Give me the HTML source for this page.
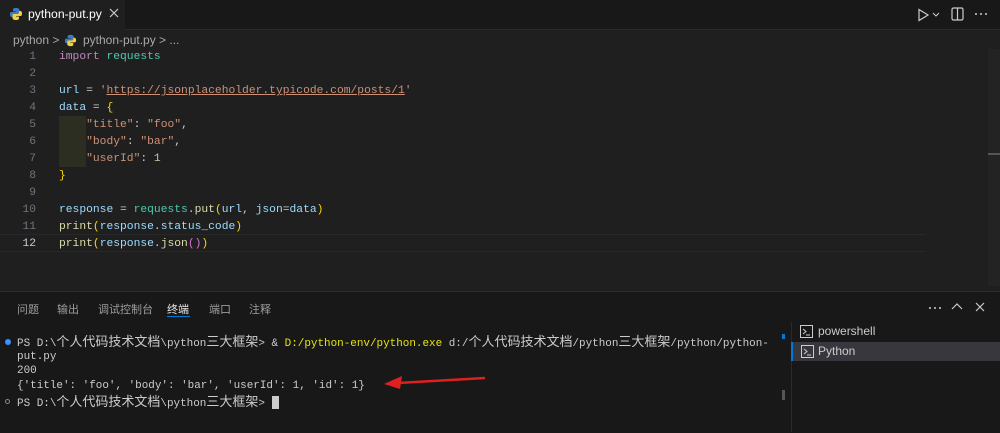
<!DOCTYPE html><html><head><meta charset="utf-8"><style>
body{margin:0;width:1000px;height:432px;background:#1f1f1f;position:relative;overflow:hidden;font-family:"Liberation Sans","Noto Sans CJK SC",sans-serif;color:#ccc}
.a{position:absolute}
.code{font-family:"Liberation Mono","Noto Sans CJK SC",monospace;font-size:11.3px;white-space:pre}
.ln{position:absolute;left:0;width:36px;text-align:right;color:#6e7681;font-family:"Liberation Mono",monospace;font-size:11.3px}
.cl{position:absolute;left:59px;color:#9cdcfe}
.k{color:#c586c0}.m{color:#4ec9b0}.s{color:#ce9178}.y{color:#ffd700}.f{color:#dcdcaa}.w{color:#ccc}.n{color:#b5cea8}.p{color:#da70d6}
.term{font-family:"Liberation Mono","Noto Sans CJK SC",monospace;font-size:10.95px;line-height:15px;height:15px;white-space:pre;color:#ccc;position:absolute;left:17px}
.c{font-size:13px;line-height:15px}
</style></head><body>
<div class="a" style="left:0;top:0;width:1000px;height:29px;background:#181818;border-bottom:1px solid #2b2b2b"></div>
<div class="a" style="left:0;top:0;width:125px;height:30px;background:#1f1f1f"></div>
<svg class="a" style="left:9px;top:7px" width="14" height="14" viewBox="0 0 14 14"><path d="M7 1C4 1 4 2 4 3v1.5h3V5H2.5C1 5 1 6.5 1 7.5S1.5 10 2.5 10H4V8.5C4 7.5 5 7 6 7h3c1 0 1.5-.5 1.5-1.5V3c0-1-1-2-3.5-2z" fill="#3f7cbf"/><path d="M7 13c3 0 3-1 3-2V9.5H7V9h4.5c1.5 0 1.5-1.5 1.5-2.5S12.5 4 11.5 4H10v1.5c0 1-1 1.5-2 1.5H5c-1 0-1.5.5-1.5 1.5V11c0 1 1 2 3.5 2z" fill="#f5cf3f"/></svg>
<div class="a" style="left:28px;top:7px;font-size:12.2px;color:#fff">python-put.py</div>
<svg class="a" style="left:109px;top:8px" width="10" height="10"><path d="M1 1L9 9M9 1L1 9" stroke="#ccc" stroke-width="1.2"/></svg>
<svg class="a" style="left:916px;top:8px" width="14" height="14"><path d="M3 1.5L12 7L3 12.5Z" fill="none" stroke="#ccc" stroke-width="1.2"/></svg>
<svg class="a" style="left:932px;top:12px" width="8" height="5"><path d="M1 1L4 4L7 1" fill="none" stroke="#ccc"/></svg>
<svg class="a" style="left:951px;top:7px" width="13" height="14"><rect x="1" y="1" width="11" height="12" rx="1.5" fill="none" stroke="#ccc" stroke-width="1.2"/><line x1="6.5" y1="1" x2="6.5" y2="13" stroke="#ccc" stroke-width="1.2"/></svg>
<svg class="a" style="left:974px;top:12px" width="14" height="4"><circle cx="2" cy="2" r="1" fill="#ccc"/><circle cx="7" cy="2" r="1" fill="#ccc"/><circle cx="12" cy="2" r="1" fill="#ccc"/></svg>
<div class="a" style="left:13px;top:33px;font-size:12px;color:#a9a9a9">python &gt;</div>
<svg class="a" style="left:64px;top:34px" width="13" height="13" viewBox="0 0 14 14"><path d="M7 1C4 1 4 2 4 3v1.5h3V5H2.5C1 5 1 6.5 1 7.5S1.5 10 2.5 10H4V8.5C4 7.5 5 7 6 7h3c1 0 1.5-.5 1.5-1.5V3c0-1-1-2-3.5-2z" fill="#3f7cbf"/><path d="M7 13c3 0 3-1 3-2V9.5H7V9h4.5c1.5 0 1.5-1.5 1.5-2.5S12.5 4 11.5 4H10v1.5c0 1-1 1.5-2 1.5H5c-1 0-1.5.5-1.5 1.5V11c0 1 1 2 3.5 2z" fill="#f5cf3f"/></svg>
<div class="a" style="left:83px;top:33px;font-size:12px;color:#a9a9a9">python-put.py &gt; ...</div>
<div class="a" style="left:59px;top:116px;width:27px;height:51px;background:#2d2e22"></div>
<div class="a" style="left:0;top:234px;width:926px;height:16px;border-top:1px solid #282828;border-bottom:1px solid #282828"></div>
<div class="a" style="left:988px;top:49px;width:12px;height:237px;background:#232323"></div>
<div class="a" style="left:988px;top:153px;width:12px;height:2px;background:#555"></div>
<div class="a code" style="left:0;top:49px;line-height:17px">
<div class="ln" style="top:0">1</div><div class="ln" style="top:17px">2</div><div class="ln" style="top:34px">3</div><div class="ln" style="top:51px">4</div><div class="ln" style="top:68px">5</div><div class="ln" style="top:85px">6</div><div class="ln" style="top:102px">7</div><div class="ln" style="top:119px">8</div><div class="ln" style="top:136px">9</div><div class="ln" style="top:153px">10</div><div class="ln" style="top:170px">11</div><div class="ln" style="top:187px;color:#ccc">12</div>
<div class="cl" style="top:0"><span class="k">import</span> <span class="m">requests</span></div>
<div class="cl" style="top:34px">url <span class="w">=</span> <span class="s">'<u style="text-decoration-color:#ce9178">https://jsonplaceholder.typicode.com/posts/1</u>'</span></div>
<div class="cl" style="top:51px">data <span class="w">=</span> <span class="y">{</span></div>
<div class="cl" style="top:68px">    <span class="s">"title"</span><span class="w">: </span><span class="s">"foo"</span><span class="w">,</span></div>
<div class="cl" style="top:85px">    <span class="s">"body"</span><span class="w">: </span><span class="s">"bar"</span><span class="w">,</span></div>
<div class="cl" style="top:102px">    <span class="s">"userId"</span><span class="w">: </span><span class="n">1</span></div>
<div class="cl" style="top:119px"><span class="y">}</span></div>
<div class="cl" style="top:153px">response <span class="w">=</span> <span class="m">requests</span><span class="w">.</span><span class="f">put</span><span class="y">(</span>url<span class="w">, </span>json<span class="w">=</span>data<span class="y">)</span></div>
<div class="cl" style="top:170px"><span class="f">print</span><span class="y">(</span>response<span class="w">.</span>status_code<span class="y">)</span></div>
<div class="cl" style="top:187px"><span class="f">print</span><span class="y">(</span>response<span class="w">.</span><span class="f">json</span><span class="p">()</span><span class="y">)</span></div>
</div>
<div class="a" style="left:0;top:291px;width:1000px;height:141px;background:#181818;border-top:1px solid #2b2b2b"></div>
<div class="a" style="left:17px;top:301px;font-size:11px;color:#9d9d9d">问题</div>
<div class="a" style="left:57px;top:301px;font-size:11px;color:#9d9d9d">输出</div>
<div class="a" style="left:98px;top:301px;font-size:11px;color:#9d9d9d">调试控制台</div>
<div class="a" style="left:167px;top:301px;font-size:11px;color:#e7e7e7">终端</div>
<div class="a" style="left:167px;top:316px;width:23px;height:1px;background:#0078d4"></div>
<div class="a" style="left:209px;top:301px;font-size:11px;color:#9d9d9d">端口</div>
<div class="a" style="left:249px;top:301px;font-size:11px;color:#9d9d9d">注释</div>
<svg class="a" style="left:928px;top:306px" width="14" height="4"><circle cx="2" cy="2" r="1" fill="#ccc"/><circle cx="7" cy="2" r="1" fill="#ccc"/><circle cx="12" cy="2" r="1" fill="#ccc"/></svg>
<svg class="a" style="left:951px;top:302px" width="12" height="8"><path d="M1 7L6 2L11 7" fill="none" stroke="#ccc" stroke-width="1.2"/></svg>
<svg class="a" style="left:975px;top:302px" width="10" height="10"><path d="M1 1L9 9M9 1L1 9" stroke="#ccc" stroke-width="1.2"/></svg>
<div class="a" style="left:791px;top:322px;width:1px;height:110px;background:#2b2b2b"></div>
<div class="a" style="left:791px;top:342px;width:209px;height:19px;background:#37373d;border-left:2px solid #0078d4"></div>
<svg class="a" style="left:800px;top:325px" width="13" height="13"><rect x=".5" y=".5" width="12" height="12" fill="none" stroke="#ccc"/><path d="M3 4l3 2.5L3 9M6 10h4" fill="none" stroke="#ccc"/></svg>
<svg class="a" style="left:801px;top:345px" width="13" height="13"><rect x=".5" y=".5" width="12" height="12" fill="none" stroke="#ccc"/><path d="M3 4l3 2.5L3 9M6 10h4" fill="none" stroke="#ccc"/></svg>
<div class="a" style="left:818px;top:324px;font-size:12px;color:#ccc">powershell</div>
<div class="a" style="left:818px;top:344px;font-size:12px;color:#ccc">Python</div>
<div class="a" style="left:782px;top:334px;width:3px;height:5px;background:#0078d4"></div>
<div class="a" style="left:782px;top:390px;width:3px;height:10px;background:#555"></div>
<div class="a" style="left:5px;top:339px;width:6px;height:6px;border-radius:50%;background:#3794ff"></div>
<div class="a" style="left:5px;top:399px;width:5px;height:5px;border-radius:50%;border:1px solid #888;box-sizing:border-box"></div>
<div class="term" style="top:335px">PS D:\<span class="c">个人代码技术文档</span>\python<span class="c">三大框架</span>&gt; &amp; <span style="color:#e5e510">D:/python-env/python.exe</span> d:/<span class="c">个人代码技术文档</span>/python<span class="c">三大框架</span>/python/python-</div>
<div class="term" style="top:350px">put.py</div>
<div class="term" style="top:364px">200</div>
<div class="term" style="top:379px">{'title': 'foo', 'body': 'bar', 'userId': 1, 'id': 1}</div>
<div class="term" style="top:395px">PS D:\<span class="c">个人代码技术文档</span>\python<span class="c">三大框架</span>&gt; <span style="display:inline-block;width:7px;height:13px;background:#ccc;vertical-align:-3px"></span></div>
<svg class="a" style="left:380px;top:374px" width="110" height="16"><path d="M105 4L18 9" stroke="#e02020" stroke-width="2.5"/><path d="M4 10L22 2L20 15Z" fill="#e02020"/></svg>
</body></html>
